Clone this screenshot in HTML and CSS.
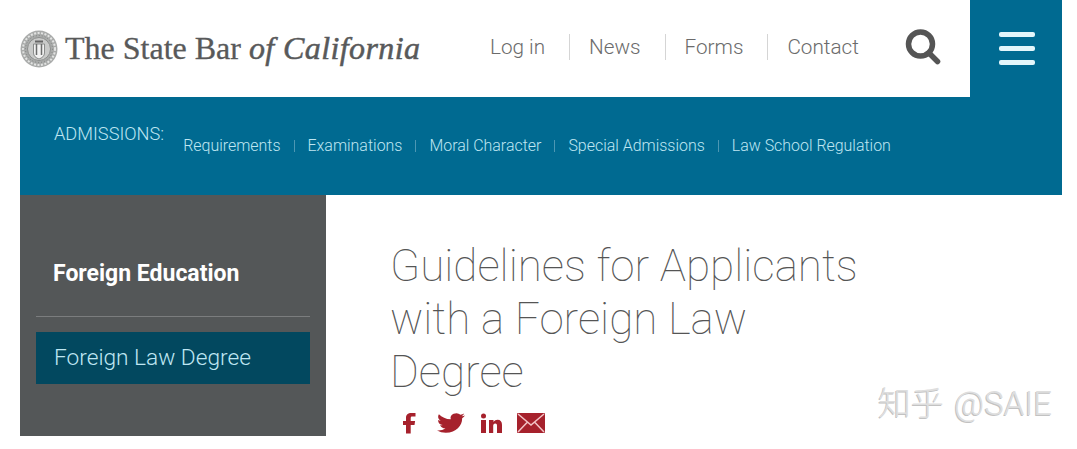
FILE: index.html
```html
<!DOCTYPE html>
<html lang="en">
<head>
  <meta charset="UTF-8" />
  <meta name="viewport" content="width=device-width, initial-scale=1.0"/>
  <title>Guidelines for Applicants with a Foreign Law Degree</title>
  <link rel="stylesheet" href="styles.css">
</head>
<body>
  <div class="page">
    <div class="topbar">
      <div class="header">
        <div class="logo">
          <svg class="seal" width="38" height="38" viewBox="0 0 38 38">
            <circle cx="19" cy="19" r="18.5" fill="#a9abaa"/>
            <circle cx="19" cy="19" r="16" fill="none" stroke="#e2e3e2" stroke-width="2" stroke-dasharray="2 1.5"/>
            <circle cx="19" cy="19" r="11.5" fill="#c9cac9" stroke="#8c8e8d" stroke-width="1"/>
            <circle cx="19" cy="19" r="13.5" fill="none" stroke="#7f8180" stroke-width="1" stroke-dasharray="1 2"/>
            <path d="M13.5 14h11v9c0 3-2.5 5-5.5 6-3-1-5.500-3-5.500-6z" fill="#f1f1f1" stroke="#8a8c8b" stroke-width="1"/>
            <path d="M16.500 14v11M21.500 14v11" stroke="#6c6e6d" stroke-width="1.500"/>
            <path d="M15 11.500h8" stroke="#666" stroke-width="2"/>
          </svg>
          <span class="logo-text">The State Bar <em>of California</em></span>
        </div>
        <nav class="top-links">
          <a>Log in</a>
          <a>News</a>
          <a>Forms</a>
          <a>Contact</a>
        </nav>
        <svg class="search" width="36" height="36" viewBox="0 0 36 36">
          <circle cx="15.500" cy="15" r="12" fill="none" stroke="#555" stroke-width="5.500"/>
          <path d="M24 24l8.500 8.500" stroke="#555" stroke-width="5.500" stroke-linecap="round"/>
        </svg>
      </div>
      <div class="menu-btn">
        <span></span>
        <span></span>
        <span></span>
      </div>
    </div>

    <div class="subnav">
      <span class="subnav-title">ADMISSIONS:</span>
      <div class="subnav-links">
        <a>Requirements</a>
        <a>Examinations</a>
        <a>Moral Character</a>
        <a>Special Admissions</a>
        <a>Law School Regulation</a>
      </div>
    </div>

    <div class="content">
      <div class="sidebar">
        <h3>Foreign Education</h3>
        <div class="side-item">Foreign Law Degree</div>
      </div>
      <div class="main">
        <h1>Guidelines for Applicants with a Foreign Law Degree</h1>
        <div class="share">
          <svg class="share-f" width="16" height="24" viewBox="0 0 16 24"><path d="M11 5.500h3.500V2h-4C6.800 2 5 4 5 6.800V10H2v4h3v8.500h4.700V14h3.800l.6-4H9.700V7.200c0-1 .4-1.700 1.300-1.700z" fill="#a6212c"/></svg>
          <svg width="28" height="24" viewBox="0 0 24 24" preserveAspectRatio="none"><path d="M23.953 4.570a10 10 0 01-2.825.775 4.958 4.958 0 002.163-2.723c-.951.555-2.005.959-3.127 1.184a4.920 4.920 0 00-8.384 4.482C7.690 8.095 4.067 6.130 1.640 3.162a4.822 4.822 0 00-.666 2.475c0 1.710.870 3.213 2.188 4.096a4.904 4.904 0 01-2.228-.616v.060a4.923 4.923 0 003.946 4.827 4.996 4.996 0 01-2.212.085 4.936 4.936 0 004.604 3.417 9.867 9.867 0 01-6.102 2.105c-.390 0-.779-.023-1.170-.067a13.995 13.995 0 007.557 2.209c9.053 0 13.998-7.496 13.998-13.985 0-.210 0-.420-.015-.630A9.935 9.935 0 0024 4.590z" fill="#a6212c"/></svg>
          <svg width="22" height="24" viewBox="0 0 22 24"><circle cx="3.500" cy="5" r="2.500" fill="#a6212c"/><path d="M1 9h5v13H1zM9 9h4.500v2c1-1.500 2.500-2.300 4-2.300 3 0 4.500 2 4.500 5.300v8h-5v-7.300c0-1.500-.6-2.300-1.800-2.300-1.300 0-2 1-2 2.500V22H9z" fill="#a6212c"/></svg>
          <svg width="28" height="22" viewBox="0 0 28 22"><rect y="1" width="28" height="20" rx="1" fill="#a6212c"/><path d="M1 2l13 11L27 2M1 20l9.500-10M27 20l-9.500-10" fill="none" stroke="#f3c3c6" stroke-width="1.500"/></svg>
        </div>
      </div>
    </div>
  </div>
  <div class="watermark">知乎 @SAIE</div>
</body>
</html>
```

FILE: styles.css
```css
* {
  box-sizing: border-box;
  margin: 0;
  padding: 0;
}

body {
  background-color: white;
  font-family: Roboto, Arial, sans-serif;
  height: 449px;
  overflow: hidden;
  position: relative;
}

.page {
  width: 1042px;
  margin-left: 20px;
}

.topbar {
  display: flex;
  height: 97px;
}

.header {
  flex: 1;
  display: flex;
  align-items: center;
}

.logo {
  display: flex;
  align-items: center;
  width: 470px;
}

.seal {
  flex-shrink: 0;
}

.logo-text {
  margin-left: 7px;
  font-family: "Liberation Serif", serif;
  font-size: 32px;
  color: #58595a;
  white-space: nowrap;
  -webkit-text-stroke: 0.3px #58595a;
}

.logo-text em {
  font-style: italic;
  letter-spacing: 0.4px;
  -webkit-text-stroke: 0.5px #58595a;
}

.top-links {
  display: flex;
  align-items: center;
  margin-bottom: 3px;
}

.top-links a {
  padding: 0 24px 0 19px;
  border-left: 1px solid #d5d5d5;
  font-size: 20.7px;
  font-weight: 300;
  line-height: 26px;
  color: #6b6b6b;
}

.top-links a:first-child {
  padding-left: 0;
  border-left: none;
}

.search {
  margin: 0 0 4px 22px;
}

.menu-btn {
  width: 92px;
  padding: 0 0 1px 1px;
  background-color: #006a91;
  display: flex;
  flex-direction: column;
  align-items: center;
  justify-content: center;
  gap: 9px;
}

.menu-btn span {
  width: 36px;
  height: 5px;
  border-radius: 2px;
  background-color: #e3f6fb;
}

.subnav {
  height: 98px;
  background-color: #006a91;
  padding: 26px 0 0 34px;
  display: flex;
  color: #bfe6f2;
  font-weight: 300;
}

.subnav-title {
  font-size: 18.2px;
  line-height: 22px;
}

.subnav-links {
  display: flex;
  margin: 13px 0 0 19px;
  font-size: 15.95px;
  line-height: 20px;
}

.subnav-links a {
  white-space: nowrap;
}

.subnav-links a + a::before {
  content: "";
  display: inline-block;
  width: 1px;
  height: 12px;
  margin: 0 13px;
  background-color: #4d97b3;
  vertical-align: -1px;
}

.content {
  display: flex;
}

.sidebar {
  width: 306px;
  height: 241px;
  background-color: #545758;
  padding: 0 16px;
}

.sidebar h3 {
  color: white;
  font-size: 23px;
  font-weight: 700;
  line-height: 26px;
  padding: 66px 0 29px 17px;
  border-bottom: 1px solid #7b7d7e;
}

.side-item {
  margin-top: 15px;
  height: 52px;
  line-height: 52px;
  padding-left: 18px;
  background-color: #02485f;
  color: #bfe6f2;
  font-size: 22.7px;
  font-weight: 300;
}

.main {
  padding: 45px 0 0 64px;
}

.main h1 {
  width: 500px;
  font-size: 44px;
  font-weight: 100;
  line-height: 53px;
  color: #555;
}

.share {
  display: flex;
  align-items: center;
  gap: 15px;
  margin: 12px 0 0 11px;
}

.share-f {
  margin-right: 5px;
}

.watermark {
  position: absolute;
  left: 878px;
  top: 385px;
  font-family: Roboto, "Noto Sans CJK SC", sans-serif;
  font-size: 33px;
  font-weight: 300;
  word-spacing: 2px;
  line-height: 38px;
  color: #dedede;
  text-shadow: -1px 1px 0 #c2c2c2;
  white-space: nowrap;
}
```
